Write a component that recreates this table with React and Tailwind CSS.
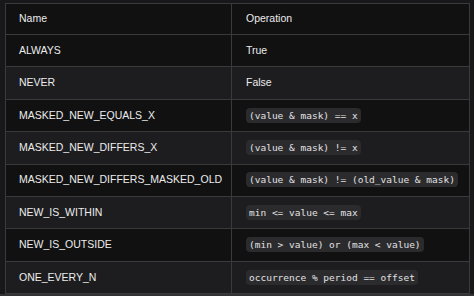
import React from "react";

const rows = [
    { name: "ALWAYS", op: "True", code: false },
    { name: "NEVER", op: "False", code: false },
    { name: "MASKED_NEW_EQUALS_X", op: "(value & mask) == x", code: true },
    { name: "MASKED_NEW_DIFFERS_X", op: "(value & mask) != x", code: true },
    { name: "MASKED_NEW_DIFFERS_MASKED_OLD", op: "(value & mask) != (old_value & mask)", code: true },
    { name: "NEW_IS_WITHIN", op: "min <= value <= max", code: true },
    { name: "NEW_IS_OUTSIDE", op: "(min > value) or (max < value)", code: true },
    { name: "ONE_EVERY_N", op: "occurrence % period == offset", code: true },
];

function App() {
    return (
        <div className="w-[474px] h-[296px] bg-[#18181a] flex flex-col overflow-hidden font-['Liberation_Sans',Arial,sans-serif] text-[10.5px] text-[#ececec]">
            <div className="pt-[3px] pl-[5px] pr-[4px]">
                <table className="w-[465px] border-collapse table-fixed">
                    <thead>
                        <tr className="h-[31px] bg-[#111112]">
                            <th className="w-[226px] border border-[#3a3a3d] pl-[13px] text-left font-normal">Name</th>
                            <th className="border border-[#3a3a3d] pl-[14px] text-left font-normal">Operation</th>
                        </tr>
                    </thead>
                    <tbody>
                        {rows.map((r, i) => (
                            <tr key={r.name} className={`h-[32.4px] ${i % 2 === 1 ? 'bg-[#1d1d20]' : 'bg-[#111112]'}`}>
                                <td className="border border-[#3a3a3d] pl-[13px] whitespace-nowrap">{r.name}</td>
                                <td className="border border-[#3a3a3d] pl-[14px] whitespace-nowrap">
                                    {r.code ? (
                                        <code className="inline-block rounded-[4px] bg-[#2b2b2e] px-[3px] py-[2px] leading-[11px] text-[9.5px] text-[#e2e2e2] font-['DejaVu_Sans_Mono',monospace] whitespace-pre">
                                            {r.op}
                                        </code>
                                    ) : r.op}
                                </td>
                            </tr>
                        ))}
                    </tbody>
                </table>
            </div>
            <div className="flex-1 bg-[#333336]" />
        </div>
    );
}

export default App;
